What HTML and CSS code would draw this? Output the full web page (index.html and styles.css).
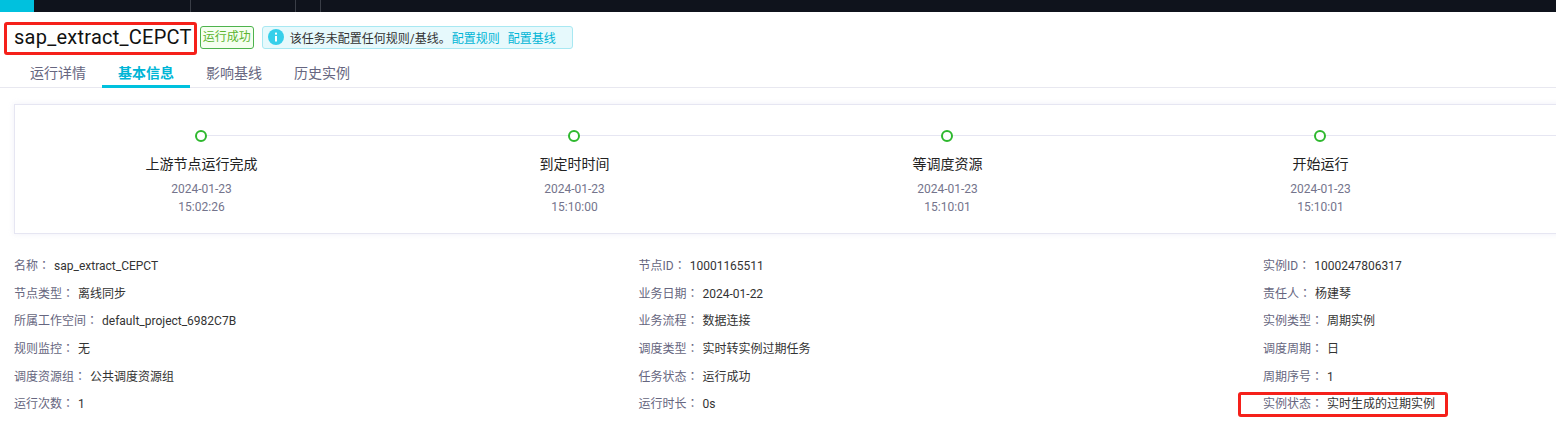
FILE: index.html
```html
<!DOCTYPE html>
<html lang="zh">
<head>
    <meta charset="UTF-8">
    <meta name="viewport" content="width=device-width, initial-scale=1.0">
    <title>sap_extract_CEPCT</title>
    <link rel="stylesheet" href="styles.css">
</head>

<body>

<div class="topbar">
    <div class="topbar-logo"></div>
    <div class="topbar-cell cell-a"></div>
    <div class="topbar-cell cell-b"></div>
    <div class="topbar-cell cell-c"></div>
</div>

<div class="page">
    <!-- 标题 -->
    <div class="title-row">
        <h1 class="task-name">sap_extract_CEPCT</h1>
        <span class="status-tag">运行成功</span>
        <div class="notice">
            <svg class="notice-icon" viewBox="0 0 16 16" width="16" height="16">
                <circle cx="8" cy="8" r="8" fill="#36cfea"></circle>
                <rect x="7" y="7" width="2" height="5.5" fill="#fff"></rect>
                <rect x="7" y="3.6" width="2" height="2" fill="#fff"></rect>
            </svg>
            <span class="notice-text">该任务未配置任何规则/基线。</span>
            <a href="#">配置规则</a>
            <a href="#">配置基线</a>
        </div>
    </div>

    <!-- 标签页 -->
    <nav class="tabs">
        <a href="#">运行详情</a>
        <a href="#" class="active">基本信息</a>
        <a href="#">影响基线</a>
        <a href="#">历史实例</a>
    </nav>

    <!-- 时间线 -->
    <div class="timeline">
        <div class="step">
            <div class="step-dot"></div>
            <h4>上游节点运行完成</h4>
            <p>2024-01-23</p>
            <p>15:02:26</p>
        </div>
        <div class="step">
            <div class="step-dot"></div>
            <h4>到定时时间</h4>
            <p>2024-01-23</p>
            <p>15:10:00</p>
        </div>
        <div class="step">
            <div class="step-dot"></div>
            <h4>等调度资源</h4>
            <p>2024-01-23</p>
            <p>15:10:01</p>
        </div>
        <div class="step">
            <div class="step-dot"></div>
            <h4>开始运行</h4>
            <p>2024-01-23</p>
            <p>15:10:01</p>
        </div>
    </div>

    <!-- 基本信息 -->
    <div class="info">
        <div class="info-item"><span class="label">名称<i>：</i></span><span>sap_extract_CEPCT</span></div>
        <div class="info-item"><span class="label">节点ID<i>：</i></span><span>10001165511</span></div>
        <div class="info-item"><span class="label">实例ID<i>：</i></span><span>1000247806317</span></div>

        <div class="info-item"><span class="label">节点类型<i>：</i></span><span>离线同步</span></div>
        <div class="info-item"><span class="label">业务日期<i>：</i></span><span>2024-01-22</span></div>
        <div class="info-item"><span class="label">责任人<i>：</i></span><span>杨建琴</span></div>

        <div class="info-item"><span class="label">所属工作空间<i>：</i></span><span>default_project_6982C7B</span></div>
        <div class="info-item"><span class="label">业务流程<i>：</i></span><span>数据连接</span></div>
        <div class="info-item"><span class="label">实例类型<i>：</i></span><span>周期实例</span></div>

        <div class="info-item"><span class="label">规则监控<i>：</i></span><span>无</span></div>
        <div class="info-item"><span class="label">调度类型<i>：</i></span><span>实时转实例过期任务</span></div>
        <div class="info-item"><span class="label">调度周期<i>：</i></span><span>日</span></div>

        <div class="info-item"><span class="label">调度资源组<i>：</i></span><span>公共调度资源组</span></div>
        <div class="info-item"><span class="label">任务状态<i>：</i></span><span>运行成功</span></div>
        <div class="info-item"><span class="label">周期序号<i>：</i></span><span>1</span></div>

        <div class="info-item"><span class="label">运行次数<i>：</i></span><span>1</span></div>
        <div class="info-item"><span class="label">运行时长<i>：</i></span><span>0s</span></div>
        <div class="info-item"><span class="label">实例状态<i>：</i></span><span>实时生成的过期实例</span></div>
    </div>
</div>

<!-- 截图上的红框标注 -->
<div class="mark mark-title"></div>
<div class="mark mark-state"></div>

</body>
</html>
```

FILE: styles.css
```css
html, body {
    height: 100%;
}

body {
    margin: 0;
    padding: 0;
    position: relative;
    overflow: hidden;
    background: #fff;
    color: #333;
    font-family: Roboto, "Noto Sans CJK SC", sans-serif;
    font-size: 12px;
}

.topbar {
    display: flex;
    height: 12px;
    background: #0f131c;
}

.topbar-logo {
    width: 34px;
    background: #00c1de;
}

.topbar-cell {
    border-right: 1px solid #3a3e47;
}

.cell-a { width: 156px; }
.cell-b { width: 104px; }
.cell-c { width: 24px; }

.page {
    width: 1900px;
}

.title-row {
    display: flex;
    align-items: center;
    height: 38px;
    padding: 6px 0 0 14px;
}

.task-name {
    margin: 0 8px 0 0;
    font-size: 20px;
    font-weight: 400;
    letter-spacing: 0.25px;
    color: #111;
}

.status-tag {
    box-sizing: border-box;
    width: 54px;
    height: 23px;
    line-height: 21px;
    text-align: center;
    margin-right: 8px;
    border: 1px solid #4db34d;
    border-radius: 3px;
    background: #f5fff0;
    color: #5cb531;
    font-size: 12px;
}

.notice {
    box-sizing: border-box;
    display: flex;
    align-items: center;
    width: 311px;
    height: 23px;
    padding-left: 5px;
    border: 1px solid #a8e8f2;
    border-radius: 3px;
    background: #e6f9fc;
    color: #333;
    font-size: 12px;
}

.notice-icon {
    margin-right: 6px;
}

.notice-text {
    margin-right: 1px;
}

.notice a {
    color: #00b5d6;
    text-decoration: none;
    margin-right: 8px;
}

.tabs {
    display: flex;
    box-sizing: border-box;
    height: 32px;
    padding-left: 14px;
    border-bottom: 1px solid #e8e8f0;
}

.tabs a {
    box-sizing: border-box;
    width: 88px;
    height: 32px;
    line-height: 34px;
    text-align: center;
    color: #666680;
    font-size: 14px;
    text-decoration: none;
}

.tabs a.active {
    color: #00b5d6;
    font-weight: 700;
    border-bottom: 3px solid #00c1de;
}

.timeline {
    display: flex;
    box-sizing: border-box;
    width: 1867px;
    height: 130px;
    margin: 16px 0 0 14px;
    border: 1px solid #e6e6f2;
    box-shadow: 0 0 6px rgba(230, 230, 242, 0.6);
}

.step {
    position: relative;
    width: 373px;
    padding-top: 25px;
    text-align: center;
}

/* 节点之间的连线 */
.step::after {
    content: "";
    position: absolute;
    top: 30px;
    left: 50%;
    width: 100%;
    height: 1px;
    background: #e6e6f2;
}

.step-dot {
    position: relative;
    z-index: 1;
    box-sizing: border-box;
    width: 12px;
    height: 12px;
    margin: 0 calc(50% - 5px) 0 calc(50% - 7px);
    border: 2px solid #2eb82e;
    border-radius: 50%;
    background: #fff;
}

.step h4 {
    margin: 12px 0 6px 0;
    font-size: 14px;
    font-weight: 400;
    line-height: 20px;
    color: #222;
}

.step p {
    margin: 0;
    line-height: 18px;
    font-size: 12px;
    color: #74748c;
}

.info {
    display: grid;
    grid-template-columns: repeat(3, 624.5px);
    grid-auto-rows: 27.7px;
    margin: 17px 0 0 14px;
}

.info-item {
    display: flex;
    align-items: baseline;
    line-height: 27.7px;
    color: #333;
}

.label {
    color: #666680;
    margin-right: 4px;
}

/* 冒号居中显示 */
.label i {
    font-family: "Noto Sans CJK TC", sans-serif;
    font-feature-settings: "locl" 0;
    font-style: normal;
}

.mark {
    position: absolute;
    box-sizing: border-box;
    border: 3px solid #f5201a;
    border-radius: 3px;
}

.mark-title {
    left: 4px;
    top: 22px;
    width: 193px;
    height: 33px;
}

.mark-state {
    left: 1238px;
    top: 392px;
    width: 210px;
    height: 25px;
}
```
